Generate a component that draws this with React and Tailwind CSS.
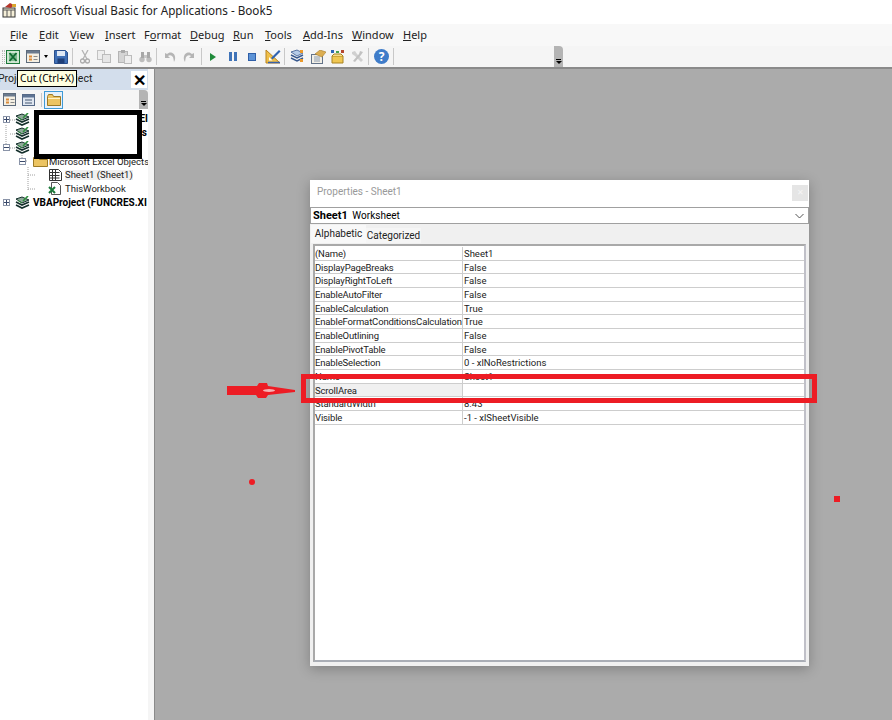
const font = { fontFamily: '"Noto Sans", sans-serif' };
const small = { fontFamily: 'Roboto, sans-serif' };

const menus = [
  ['', 'F', 'ile', 'w-[29px]'],
  ['', 'E', 'dit', 'w-[31px]'],
  ['', 'V', 'iew', 'w-[35px]'],
  ['', 'I', 'nsert', 'w-[39px]'],
  ['F', 'o', 'rmat', 'w-[46px]'],
  ['', 'D', 'ebug', 'w-[43px]'],
  ['', 'R', 'un', 'w-[32px]'],
  ['', 'T', 'ools', 'w-[38px]'],
  ['', 'A', 'dd-Ins', 'w-[49px]'],
  ['', 'W', 'indow', 'w-[51px]'],
  ['', 'H', 'elp', 'w-[30px]'],
];

const props = [
  ['(Name)', 'Sheet1'],
  ['DisplayPageBreaks', 'False'],
  ['DisplayRightToLeft', 'False'],
  ['EnableAutoFilter', 'False'],
  ['EnableCalculation', 'True'],
  ['EnableFormatConditionsCalculation', 'True'],
  ['EnableOutlining', 'False'],
  ['EnablePivotTable', 'False'],
  ['EnableSelection', '0 - xlNoRestrictions'],
  ['Name', 'Sheet1'],
  ['ScrollArea', ''],
  ['StandardWidth', '8.43'],
  ['Visible', '-1 - xlSheetVisible'],
];

const Ico = ({ w = 15, h = 15, className = '', children }) => (
  <svg width={w} height={h} viewBox={`0 0 ${w} ${h}`} className={`shrink-0 ${className}`}>
    {children}
  </svg>
);

const Sep = () => <div className="h-[17px] w-px shrink-0 bg-[#c8c8c8]" />;

const Grip = () => (
  <div className="flex h-full w-[9px] shrink-0 flex-col items-center justify-end rounded-tr-sm bg-[#b4b4b4] pb-[3px]">
    <div className="mb-[1px] h-px w-[5px] bg-black" />
    <div className="h-0 w-0 border-x-[3px] border-t-[3px] border-x-transparent border-t-black" />
  </div>
);

const ExcelIcon = () => (
  <Ico w={14} h={14}>
    <rect x="0.5" y="0.5" width="13" height="13" fill="#cfe6d2" stroke="#1d7a3b" />
    <path d="M3 3h8v8H3z" fill="#7fb98f" />
    <path d="M3.5 3l7 8M10.5 3l-7 8" stroke="#0f6b30" strokeWidth="1.8" />
  </Ico>
);

const FormIcon = ({ x = 14 }) => (
  <Ico w={x} h={13}>
    <rect x="0.5" y="0.5" width={x - 1} height="12" fill="#f4efe3" stroke="#5d6b7c" />
    <rect x="1" y="1" width={x - 2} height="2.5" fill="#6b7a8e" />
    <rect x="3" y="5.5" width="3" height="2" fill="#d98a3a" />
    <rect x="3" y="8.5" width="3" height="2" fill="#d98a3a" />
    <path d="M7.5 6.5h4M7.5 9.5h4" stroke="#8a8a8a" />
  </Ico>
);

const SaveIcon = () => (
  <Ico w={14} h={14}>
    <path d="M.5.5h11l2 2v11H.5z" fill="#3f6fb5" stroke="#2a4f8c" />
    <rect x="3" y="1" width="8" height="5" fill="#dfe8f4" />
    <rect x="3.5" y="8.5" width="7" height="5" fill="#1f3f78" />
  </Ico>
);

const Cut = () => (
  <Ico w={10} h={14}>
    <path d="M2 0l5 9M8 0L3 9" stroke="#b3b3b3" strokeWidth="1.3" />
    <circle cx="2.5" cy="11" r="2" fill="none" stroke="#ababab" strokeWidth="1.3" />
    <circle cx="7.5" cy="11" r="2" fill="none" stroke="#ababab" strokeWidth="1.3" />
  </Ico>
);

const Copy = () => (
  <Ico w={14} h={13}>
    <rect x="0.5" y="0.5" width="7" height="9" fill="#eee" stroke="#c2c2c2" />
    <rect x="5.5" y="4.5" width="8" height="8" fill="#e6e6e6" stroke="#bcbcbc" />
  </Ico>
);

const Paste = () => (
  <Ico w={14} h={14}>
    <rect x="0.5" y="1.5" width="9" height="11" fill="#d4d4d4" stroke="#b5b5b5" />
    <rect x="3" y="0" width="4" height="3" fill="#a8a8a8" />
    <rect x="6.5" y="5.5" width="7" height="8" fill="#eee" stroke="#bcbcbc" />
  </Ico>
);

const Find = () => (
  <Ico w={13} h={12}>
    <circle cx="3" cy="8.5" r="2.7" fill="#bdbdbd" />
    <circle cx="10" cy="8.5" r="2.7" fill="#bdbdbd" />
    <path d="M2 1h3v6H2zM8 1h3v6H8z" fill="#a8a8a8" />
    <rect x="5" y="4" width="3" height="3" fill="#c8c8c8" />
  </Ico>
);

const Undo = ({ flip }) => (
  <Ico w={12} h={12} className={flip ? '-scale-x-100' : ''}>
    <path d="M1 2v5h5L4 5c2-1.5 5-.5 5.5 3l.5 3c2-3 1.5-8-2-9.300C6 1 4.500 1.500 3 3z" fill="#b5b5b5" />
  </Ico>
);

const Design = () => (
  <Ico w={16} h={15}>
    <path d="M1 1v13h14z" fill="#f0c04a" stroke="#b98420" />
    <path d="M4 8v3.500h3.500z" fill="#fff" />
    <path d="M6 9L14 1l1.500 1.500-8 8z" fill="#3163b0" />
    <path d="M3 13.500h12" stroke="#3a62a8" strokeWidth="1.500" />
  </Ico>
);

const ProjectIcon = () => (
  <Ico w={14} h={15}>
    <path d="M1 3l6-2 6 3-6 3z" fill="#b5cbe8" stroke="#38598f" strokeWidth=".8" />
    <path d="M1 6l6 3 6-3M1 9l6 3 6-3" fill="none" stroke="#38598f" strokeWidth="1.400" />
    <rect x="10" y="1" width="3" height="3" fill="#ea9a2c" />
    <rect x="10" y="10" width="3" height="3" fill="#ea9a2c" />
  </Ico>
);

const PropsIcon = () => (
  <Ico w={15} h={14}>
    <rect x="0.500" y="4.500" width="11" height="9" fill="#f2efe6" stroke="#64748a" />
    <path d="M3 7h6M3 9h6M3 11h6" stroke="#8d9cb0" />
    <path d="M4 4l5-4 6 2-4 5z" fill="#dcae52" stroke="#a87c2a" strokeWidth=".6" />
  </Ico>
);

const ObjectIcon = () => (
  <Ico w={15} h={15}>
    <path d="M2 7h11v7H2z" fill="#f0c752" stroke="#a98322" />
    <path d="M2 7l2-2h7l2 2" fill="#f7dc8c" stroke="#a98322" />
    <rect x="1" y="1" width="3" height="3" fill="#2f66b7" />
    <rect x="6" y="2" width="3" height="2" fill="#48a14d" />
    <rect x="11" y="1" width="3" height="3" fill="#b5462f" />
  </Ico>
);

const ToolsIcon = () => (
  <Ico w={13} h={13}>
    <path d="M1 2l3-1 2 3 4 4 2 2-2 2-2-2-4-4-3-2z" fill="#d0d0d0" />
    <path d="M2 11l6-7 1-3 3 1-2 3-6 7z" fill="#c2c2c2" />
  </Ico>
);

const HelpIcon = () => (
  <div className="flex h-[15px] w-[15px] shrink-0 items-center justify-center rounded-full bg-[#3f7cc9] text-[12px] font-bold leading-none text-white">
    ?
  </div>
);

const Folder = () => (
  <Ico w={14} h={12}>
    <path d="M.5 2.500l1-2h4l1 2h7v9H.5z" fill="#ecc462" stroke="#9c7a26" />
    <path d="M1 4.500h12" stroke="#fff3c8" />
  </Ico>
);

const VbaIcon = () => (
  <Ico w={15} h={13}>
    <path d="M1 3l6-2 7 3-7 3z" fill="#8fa89a" stroke="#15302c" />
    <path d="M1 6l6 3 7-3M1 9l6 3 7-3" fill="none" stroke="#15302c" strokeWidth="1.600" />
    <path d="M8 5l5-5" stroke="#2f8f3e" strokeWidth="1.600" />
    <path d="M3 4.500l4 2.500" stroke="#2f8f3e" />
  </Ico>
);

const PlusBox = ({ minus }) => (
  <div className="relative h-[7px] w-[7px] shrink-0 border border-[#8a94a8] bg-white">
    <div className="absolute left-0 top-[2px] h-px w-[5px] bg-[#3b4a6b]" />
    {!minus && <div className="absolute left-[2px] top-0 h-[5px] w-px bg-[#3b4a6b]" />}
  </div>
);

const TreeRow = ({ pad, box, minus, icon, bold, selected, children }) => (
  <div style={small} className={`flex h-[13.800px] items-center whitespace-nowrap text-[9.500px] leading-none text-[#1a1a1a] ${pad}`}>
    {box && <PlusBox minus={minus} />}
    {icon}
    <span className={`${bold ? 'text-[10px] font-bold text-black' : ''} ${selected ? 'bg-[#f0f0f0]' : ''}`}>
      {children}
    </span>
  </div>
);

const SheetIcon = () => (
  <Ico w={13} h={12} className="mr-[3px]">
    <path d="M.5.500h9l3 3v8H.5z" fill="#fff" stroke="#333" />
    <path d="M.5 3.500h10M.5 6.500h10M.5 9h10M3.500.5v11M6.500.5v11" stroke="#333" />
  </Ico>
);

const BookIcon = () => (
  <Ico w={13} h={13} className="mr-[4px]">
    <path d="M3.500.500h6l3 3v9h-9z" fill="#fff" stroke="#555" />
    <path d="M1 5l6 6M7 5l-6 6" stroke="#1d7a3b" strokeWidth="2" />
  </Ico>
);

export default function App() {
  return (
    <div style={font} className="relative h-[720px] w-[892px] overflow-hidden bg-white text-black">
      {/* title bar */}
      <div className="flex h-[24px] items-center bg-white pb-[3px] pl-[2px]">
        <Ico w={15} h={15} className="mr-[3px]">
          <rect x="1" y="5" width="12" height="9" fill="#f5efd8" stroke="#333" />
          <path d="M1 7h12M5 7v7M9 7v7" stroke="#555" />
          <path d="M3 4l5-4 4 2-3 3z" fill="#b5352a" />
          <path d="M10 1h4v3h-4z" fill="#d9a52e" />
        </Ico>
        <span className="text-[11.700px] leading-none text-[#222]">Microsoft Visual Basic for Applications - Book5</span>
      </div>

      {/* menu bar */}
      <div className="flex h-[22px] items-center bg-[#f8f8f8] pb-[2px] pl-[10px] pr-[330px]">
        {menus.map(([pre, key, rest, w]) => (
          <span key={key + rest} className={`${w} whitespace-nowrap text-[11px] leading-none text-[#222]`}>
            {pre}<span className="underline">{key}</span>{rest}
          </span>
        ))}
      </div>

      {/* toolbar */}
      <div className="flex h-[23px] items-center border-b-2 border-[#8a8a8a] bg-[#f5f5f5] pl-[2px]">
        <div className="mr-[1px] h-[14px] w-[3px] border-x border-dotted border-[#bbb]" />
        <div className="flex h-full w-[557px] items-center">
          <ExcelIcon />
          <div className="ml-[6px]"><FormIcon /></div>
          <div className="ml-[4px] h-0 w-0 border-x-[2.500px] border-t-[3px] border-x-transparent border-t-black" />
          <div className="ml-[6px]"><SaveIcon /></div>
          <div className="ml-[4px]"><Sep /></div>
          <div className="ml-[7px]"><Cut /></div>
          <div className="ml-[7px]"><Copy /></div>
          <div className="ml-[7px]"><Paste /></div>
          <div className="ml-[7px]"><Find /></div>
          <div className="ml-[4px]"><Sep /></div>
          <div className="ml-[7px]"><Undo /></div>
          <div className="ml-[7px]"><Undo flip /></div>
          <div className="ml-[6px]"><Sep /></div>
          <div className="ml-[8px] h-0 w-0 border-y-[4.500px] border-l-[6px] border-y-transparent border-l-[#1f8a3a]" />
          <div className="ml-[13px] flex h-[9px] w-[8px] justify-between">
            <div className="w-[3px] bg-[#3f73b8]" />
            <div className="w-[3px] bg-[#3f73b8]" />
          </div>
          <div className="ml-[11px] h-[8px] w-[8px] border border-[#2f5fa8] bg-[#5d93d6]" />
          <div className="ml-[9px]"><Design /></div>
          <div className="ml-[3px]"><Sep /></div>
          <div className="ml-[5px]"><ProjectIcon /></div>
          <div className="ml-[7px]"><PropsIcon /></div>
          <div className="ml-[4px]"><ObjectIcon /></div>
          <div className="ml-[6px]"><ToolsIcon /></div>
          <div className="ml-[4px]"><Sep /></div>
          <div className="ml-[5px]"><HelpIcon /></div>
          <div className="ml-[4px]"><Sep /></div>
          <div className="h-full flex-1" />
          <Grip />
        </div>
      </div>

      <div className="flex h-[651px]">
        {/* project explorer */}
        <div className="flex w-[148px] shrink-0 flex-col">
          <div className="flex h-[21px] items-center justify-between bg-[#d3deec] pr-[1px]">
            <span style={small} className="-ml-[2px] whitespace-nowrap text-[10.500px] leading-none text-[#222]">Project - VBAProject</span>
            <div className="flex h-[17px] w-[16px] items-center justify-center bg-white text-[16px] font-bold leading-none">✕</div>
          </div>
          <div className="flex h-[19px] items-center bg-[#f5f5f5] pl-[3px]">
            <FormIcon x={13} />
            <div className="ml-[6px]">
              <Ico w={13} h={12}>
                <rect x="0.500" y="0.500" width="12" height="11" fill="#dfe6f0" stroke="#566a88" />
                <rect x="1" y="1" width="11" height="2.500" fill="#5d7393" />
                <path d="M3 6h7M3 9h7" stroke="#7a889c" strokeWidth="1.500" />
              </Ico>
            </div>
            <div className="ml-[6px] h-[14px] w-px bg-[#c8c8c8]" />
            <div className="ml-[2px] flex h-[18px] w-[19px] items-center justify-center border border-[#3f9ad6] bg-[#e6f1fa]">
              <Folder />
            </div>
            <div className="flex-1" />
            <Grip />
          </div>
          <div className="relative flex-1 overflow-hidden bg-white pt-[4px]">
            <svg width="148" height="110" className="absolute left-0 top-0" fill="none" stroke="#a0a0a0" strokeDasharray="1 1">
              <path d="M6 16v22M10 11h5M10 25h5M10 39h5M22 44v8M27 52h-5M28 58v24M28 66h7M28 80h7" />
            </svg>
            <TreeRow pad="pl-[3px]" box icon={<div className="ml-[5px]"><VbaIcon /></div>} />
            <TreeRow pad="pl-[15px]" icon={<VbaIcon />} />
            <TreeRow pad="pl-[3px]" box minus icon={<div className="ml-[5px]"><VbaIcon /></div>} />
            <TreeRow
              pad="pl-[19px]"
              box
              minus
              icon={<div className="ml-[7px] mr-[1px]"><Ico w={15} h={11}><path d="M.5 1.500h5l1 2h8v7H.5z" fill="#ecc462" stroke="#9c7a26" /></Ico></div>}
            >
              Microsoft Excel Objects
            </TreeRow>
            <TreeRow pad="pl-[49px]" icon={<SheetIcon />} selected>Sheet1 (Sheet1)</TreeRow>
            <TreeRow pad="pl-[48px]" icon={<BookIcon />}>ThisWorkbook</TreeRow>
            <TreeRow pad="pl-[3px]" box icon={<div className="ml-[5px] mr-[3px]"><VbaIcon /></div>} bold>VBAProject (FUNCRES.XI</TreeRow>
            {/* name tails sticking out of the black box */}
            <span style={small} className="absolute right-0 top-[5px] text-[10px] font-bold leading-none">EI</span>
            <span style={small} className="absolute right-[1px] top-[19px] text-[10px] font-bold leading-none">s</span>
          </div>
        </div>

        {/* gutter and MDI client area */}
        <div className="w-[6px] shrink-0 bg-[#f5f5f5]" />
        <div className="flex-1 border-l border-[#8a8a8a] bg-[#ababab] pl-[155px] pt-[111px]">
          {/* properties window */}
          <div style={small} className="flex h-[486px] w-[499px] flex-col bg-[#f0f0f0] shadow-[0_3px_12px_rgba(0,0,0,0.25)]">
            <div className="flex h-[27px] justify-between bg-white pl-[7px] pr-[1px]">
              <span className="mt-[7px] text-[10px] leading-none text-[#999]">Properties - Sheet1</span>
              <div className="mt-[5px] flex h-[16px] w-[16px] items-center justify-center bg-[#e5e5e5] text-[8px] text-[#f5f5f5]">✕</div>
            </div>
            <div className="flex h-[17px] items-center justify-between border border-[#a0a0a0] bg-white pl-[2px] pr-[4px] text-[10px] leading-none">
              <span><b className="text-[11px]">Sheet1</b> <span className="ml-[2px]">Worksheet</span></span>
              <svg width="9" height="6" viewBox="0 0 9 6" fill="none" stroke="#555"><path d="M.5 1l4 4 4-4" /></svg>
            </div>
            <div className="flex h-[19px] items-end pl-[1px] pt-[1px] text-[10px] leading-none text-[#222]">
              <div className="flex h-[18px] w-[55px] items-center justify-center bg-[#f8f8f8]">Alphabetic</div>
              <div className="flex h-[15px] w-[55px] items-center justify-center bg-[#f5f5f5]">Categorized</div>
            </div>
            <div className="mx-[3px] mb-[4px] mt-px flex-1 border-2 border-[#a9a9a9] border-r-[#c0c0c8] border-b-[#a9adb5] bg-white pt-px">
              {props.map(([name, value]) => (
                <div key={name} className="flex h-[13.680px] items-center border-b border-[#cdcdcd] text-[9.500px] leading-none text-[#222]">
                  <div className={`flex h-full w-[148px] shrink-0 items-center border-r border-[#cdcdcd] pt-px tracking-[-0.15px] ${name === 'ScrollArea' ? 'bg-[#f0f0f0]' : ''}`}>{name}</div>
                  <div className="pl-[1px] pt-px">{value}</div>
                </div>
              ))}
            </div>
          </div>
        </div>
      </div>

      {/* tooltip */}
      <div className="absolute left-[17px] top-[70px] flex h-[17px] w-[60px] items-center justify-center border border-black bg-[#ffffe1] text-[10.200px] leading-none">
        Cut (Ctrl+X)
      </div>

      {/* markup drawn on the screenshot */}
      <div className="absolute left-[34px] top-[110px] h-[49px] w-[108px] border-[5px] border-black bg-white" />
      <div className="absolute left-[301px] top-[374px] h-[29px] w-[516px] border-[5px] border-[#ed1c24]" />
      <svg width="70" height="18" className="absolute left-[226px] top-[382px]">
        <path d="M1 4h30l2-3h8l1 3 27 4v2l-27 3-2 3h-8l-2-3H1z" fill="#ed1c24" />
        <ellipse cx="43" cy="8.500" rx="6" ry="1.500" fill="#f3b3b5" />
      </svg>
      <div className="absolute left-[249px] top-[479px] h-[6px] w-[6px] rounded-full bg-[#ed1c24]" />
      <div className="absolute left-[834px] top-[496px] h-[6px] w-[6px] bg-[#ed1c24]" />
    </div>
  );
}
